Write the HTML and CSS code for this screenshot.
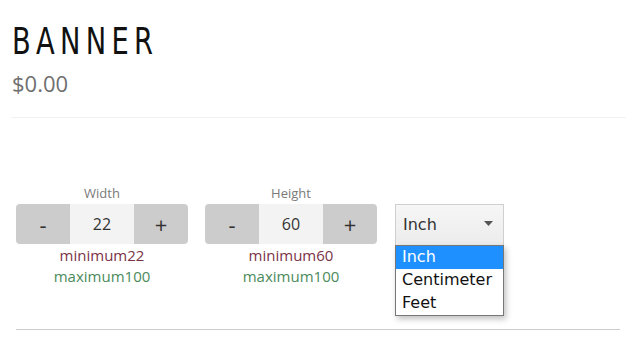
FILE: index.html
```html
<!DOCTYPE html>
<html>
<head>
<meta charset="utf-8">
<link rel="stylesheet" href="styles.css">
</head>
<body>
<div class="page">
  <h1 class="title">BANNER</h1>
  <div class="price">$0.00</div>
  <hr class="sep">
  <div class="controls">
    <div class="dim">
      <div class="label">Width</div>
      <div class="stepper">
        <span class="btn">-</span>
        <span class="val">22</span>
        <span class="btn">+</span>
      </div>
      <div class="min">minimum22</div>
      <div class="max">maximum100</div>
    </div>
    <div class="dim">
      <div class="label">Height</div>
      <div class="stepper">
        <span class="btn">-</span>
        <span class="val">60</span>
        <span class="btn">+</span>
      </div>
      <div class="min">minimum60</div>
      <div class="max">maximum100</div>
    </div>
    <div class="unit">
      <div class="select">
        <span>Inch</span>
        <svg class="arrow" width="9" height="5" viewBox="0 0 9 5"><path d="M0 0H9L4.5 5Z" fill="#555"/></svg>
      </div>
      <div class="menu">
        <div class="opt active">Inch</div>
        <div class="opt">Centimeter</div>
        <div class="opt">Feet</div>
      </div>
    </div>
  </div>
  <hr class="bottom">
</div>
</body>
</html>
```
FILE: styles.css
```css
html, body { margin: 0; padding: 0; background: #fff; }
body { font-family: "Open Sans", "DejaVu Sans", sans-serif; }
.page { padding: 21px 0 0 12px; width: 614px; }
.title {
  margin: 0;
  font-family: "Liberation Sans Narrow", "DejaVu Sans Condensed", sans-serif;
  font-weight: normal;
  font-size: 37px;
  line-height: 42px;
  letter-spacing: 6.5px;
  color: #111;
  transform: scaleX(0.82);
  transform-origin: left;
}
.price {
  margin-top: 6px;
  font-size: 22px;
  line-height: 28px;
  color: #6f6f6f;
}
.sep {
  margin: 20px 0 0 -1px;
  border: 0;
  border-top: 1px solid #f2f2f2;
  height: 0;
}
.controls {
  display: flex;
  margin: 68px 0 0 4px;
  gap: 17px;
}
.dim { width: 172px; display: flex; flex-direction: column; align-items: center; }
.label { font-size: 13px; line-height: 15px; color: #7a7a7a; margin-bottom: 3px; }
.stepper {
  display: flex;
  width: 172px;
  height: 40px;
  background: #cccccc;
  border-radius: 4px;
  overflow: hidden;
}
.btn {
  width: 54px;
  display: flex; align-items: center; justify-content: center;
  font-size: 22px; color: #333;
}
.val {
  width: 64px;
  background: #f3f3f3;
  display: flex; align-items: center; justify-content: center;
  font-size: 16px; color: #333;
}
.min { font-size: 15px; line-height: 21px; color: #7a3346; margin-top: 1px; }
.max { font-size: 15px; line-height: 21px; color: #4b8a5c; }
.unit { position: relative; margin-left: 1px; padding-top: 18px; }
.select {
  height: 38px;
  border: 1px solid #cfcfcf;
  background: linear-gradient(#f6f6f6, #ececec);
  display: flex; align-items: center; justify-content: space-between;
  padding: 0 10px 2px 7px;
  box-sizing: content-box;
  width: 90px;
  font-family: "DejaVu Sans", sans-serif;
  font-size: 16px; color: #333;
}
.arrow { margin-top: -2px; }
.menu {
  position: absolute;
  left: 0; top: 59px;
  width: 107px;
  border: 1px solid #777;
  background: #fff;
  box-shadow: 2px 3px 6px rgba(0,0,0,0.25);
  font-family: "DejaVu Sans", sans-serif;
  font-size: 16px;
  color: #111;
}
.opt { height: 23px; line-height: 22px; padding-left: 6px; }
.opt.active { background: #1e90ff; color: #fff; }
.bottom {
  margin: 42px 0 0 4px;
  width: 604px;
  border: 0;
  border-top: 1px solid #cccccc;
  height: 0;
}
```
